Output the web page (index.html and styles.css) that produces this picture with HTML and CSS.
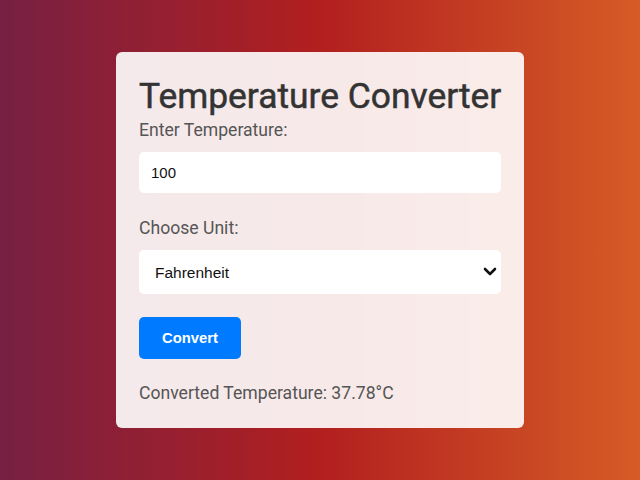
FILE: index.html
```html
<!DOCTYPE html>
<html lang="en">
<head>
<meta charset="UTF-8">
<title>Temperature Converter</title>
<link rel="stylesheet" href="styles.css">
</head>
<body>
<div class="card">
  <h1 class="title">Temperature Converter</h1>
  <label class="label label-first" for="temp">Enter Temperature:</label>
  <input class="field" id="temp" type="number" value="100">
  <label class="label" for="unit">Choose Unit:</label>
  <div class="select-wrap">
    <select class="field select" id="unit">
      <option>Celsius</option>
      <option selected>Fahrenheit</option>
      <option>Kelvin</option>
    </select>
    <svg class="chevron" width="14" height="9" viewBox="0 0 14 9" aria-hidden="true">
      <path d="M2 2 L7 7 L12 2" fill="none" stroke="#111" stroke-width="2.6" stroke-linecap="round" stroke-linejoin="round"/>
    </svg>
  </div>
  <button class="btn" type="button">Convert</button>
  <p class="result">Converted Temperature: 37.78°C</p>
</div>
</body>
</html>
```
FILE: styles.css
```css
html, body {
  margin: 0;
  height: 100%;
}
body {
  background: linear-gradient(to right, #772043, #b21f1f, #d65c26);
  display: flex;
  align-items: center;
  justify-content: center;
  font-family: Roboto, "Liberation Sans", sans-serif;
}
.card {
  box-sizing: border-box;
  width: 408px;
  padding: 24px 23px;
  background: rgba(255, 255, 255, 0.9);
  border-radius: 6px;
  display: flex;
  flex-direction: column;
  align-items: flex-start;
}
.title {
  margin: 0 0 2px;
  font-size: 35.4px;
  font-weight: 400;
  color: #333;
  line-height: 41.2px;
  white-space: nowrap;
  -webkit-text-stroke: 0.5px #333;
}
.label {
  display: block;
  font-size: 17.6px;
  line-height: 20.6px;
  color: #555;
  margin: 24.7px 0 11.7px;
}
.label-first {
  margin-top: 0;
  margin-bottom: 12px;
}
.field {
  box-sizing: border-box;
  width: 100%;
  height: 41px;
  border: none;
  border-radius: 5px;
  background: #fff;
  padding: 0 12px;
  font-family: "Liberation Sans", Arial, sans-serif;
  font-size: 15px;
  color: #111;
  outline: none;
}
.field::-webkit-inner-spin-button,
.field::-webkit-outer-spin-button {
  -webkit-appearance: none;
  margin: 0;
}
.select-wrap {
  position: relative;
  width: 100%;
  display: flex;
}
.select {
  -webkit-appearance: none;
  appearance: none;
  height: 44px;
  padding: 0 16px;
  font-size: 15.5px;
}
.chevron {
  position: absolute;
  right: 4px;
  top: 17px;
  pointer-events: none;
}
.btn {
  margin-top: 23px;
  width: 102px;
  height: 42px;
  border: none;
  border-radius: 5px;
  background: #007bff;
  color: #fff;
  font-family: "Liberation Sans", Arial, sans-serif;
  font-weight: 700;
  font-size: 14.8px;
}
.result {
  margin: 23.7px 0 0;
  font-size: 17.6px;
  line-height: 20.6px;
  color: #555;
}
```
